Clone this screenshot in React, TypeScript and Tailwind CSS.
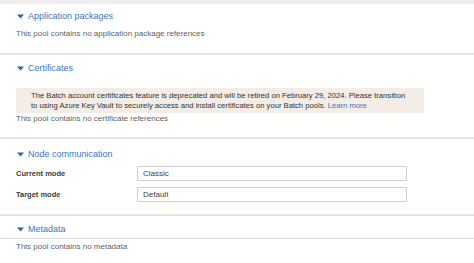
import React from 'react';

const FONT = { fontFamily: '"Liberation Sans", Arial, sans-serif' };

const Caret = () => (
    <svg width="7" height="5" viewBox="0 0 7 5" className="shrink-0">
        <path d="M0 0.5 L7 0.5 L3.5 4.5 Z" fill="#2f62a8" />
    </svg>
);

const SectionHeader: React.FC<{ title: string; className?: string }> = ({ title, className }) => (
    <div className={`flex items-center h-[12px] pl-[17px] gap-[4px] ${className || ''}`}>
        <Caret />
        <span className="text-[9px] leading-[12px] text-[#3d75c0]">{title}</span>
    </div>
);

const Note: React.FC<{ text: string; className?: string }> = ({ text, className }) => (
    <p className={`h-[10px] pl-[16px] text-[8px] leading-[10px] text-[#5f5f5f] ${className || ''}`}>{text}</p>
);

const Separator = () => <div className="h-[2px] shrink-0 bg-[#e4e4e4]" />;

const ModeRow: React.FC<{ label: string; value: string; className?: string }> = ({ label, value, className }) => (
    <div className={`flex items-center h-[15px] ${className || ''}`}>
        <span className="w-[137px] pl-[16px] text-[7.5px] font-bold text-[#3a3a3a]">{label}</span>
        <div className="w-[270px] h-[15px] border border-[#d0d0d0] bg-white flex items-center pl-[5px] text-[8px] text-[#444]">
            {value}
        </div>
    </div>
);

export default function App() {
    return (
        <div className="w-[474px] h-[263px] bg-white overflow-hidden flex flex-col" style={FONT}>
            <div className="h-[4px] shrink-0 bg-[#eeeeee]" />

            {/* Application packages */}
            <div className="h-[49px] shrink-0 flex flex-col">
                <SectionHeader title="Application packages" className="mt-[6px]" />
                <Note text="This pool contains no application package references" className="mt-[7px]" />
            </div>
            <Separator />

            {/* Certificates */}
            <div className="h-[82px] shrink-0 flex flex-col">
                <SectionHeader title="Certificates" className="mt-[7px]" />
                <div className="ml-[16px] mt-[14px] w-[408px] h-[25px] bg-[#f3ece7] pl-[15px] pt-[3px] text-[7.65px] leading-[10px] text-[#333]">
                    <p>The Batch account certificates feature is deprecated and will be retired on February 29, 2024. Please transition</p>
                    <p>
                        to using Azure Key Vault to securely access and install certificates on your Batch pools.{' '}
                        <span className="text-[#3d75c0]">Learn more</span>
                    </p>
                </div>
                <Note text="This pool contains no certificate references" className="mt-[1px]" />
            </div>
            <Separator />

            {/* Node communication */}
            <div className="h-[75px] shrink-0 flex flex-col">
                <SectionHeader title="Node communication" className="mt-[9px]" />
                <ModeRow label="Current mode" value="Classic" className="mt-[6px]" />
                <ModeRow label="Target mode" value="Default" className="mt-[6px]" />
                <div className="mt-[4px] h-[4px] bg-[#fffdf2]" />
            </div>
            <Separator />

            {/* Metadata */}
            <div className="flex flex-col">
                <SectionHeader title="Metadata" className="mt-[7px]" />
                <div className="mt-[3px] h-[1px] bg-[#dcdcdc]" />
                <Note text="This pool contains no metadata" className="mt-[3px]" />
            </div>
        </div>
    );
}
